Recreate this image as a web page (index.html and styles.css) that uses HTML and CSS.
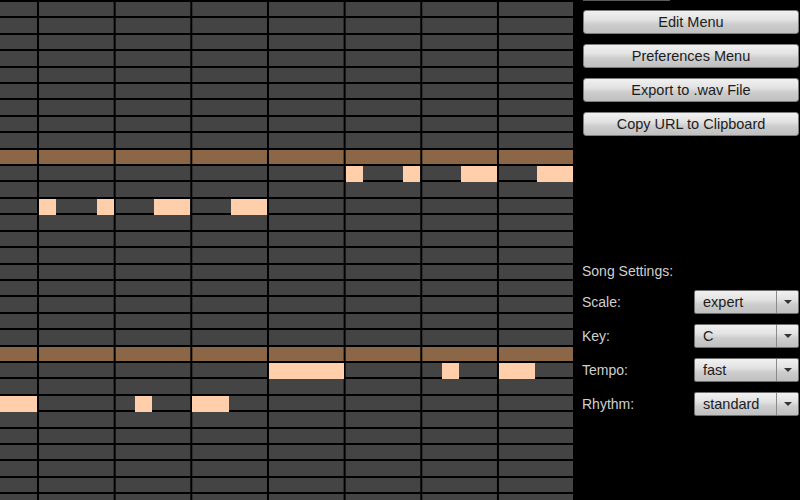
FILE: index.html
```html
<!DOCTYPE html>
<html lang="en">
<head>
<meta charset="utf-8">
<title>Song Editor</title>
<link rel="stylesheet" href="styles.css">
</head>
<body>
<div class="app">
  <div class="grid">
    <div class="row"></div>
    <div class="row"></div>
    <div class="row"></div>
    <div class="row"></div>
    <div class="row"></div>
    <div class="row"></div>
    <div class="row"></div>
    <div class="row"></div>
    <div class="row"></div>
    <div class="row tonic"></div>
    <div class="row">
      <div class="note" style="left:345.7px;width:17.2px"></div>
      <div class="note" style="left:403.2px;width:17.2px"></div>
      <div class="note" style="left:460.7px;width:36.3px"></div>
      <div class="note" style="left:537.3px;width:36.3px"></div>
    </div>
    <div class="row"></div>
    <div class="row">
      <div class="note" style="left:39px;width:17.2px"></div>
      <div class="note" style="left:96.5px;width:17.8px"></div>
      <div class="note" style="left:154px;width:36.3px"></div>
      <div class="note" style="left:230.7px;width:36.3px"></div>
    </div>
    <div class="row"></div>
    <div class="row"></div>
    <div class="row"></div>
    <div class="row"></div>
    <div class="row"></div>
    <div class="row"></div>
    <div class="row"></div>
    <div class="row"></div>
    <div class="row tonic"></div>
    <div class="row">
      <div class="note" style="left:269px;width:74.7px"></div>
      <div class="note" style="left:441.5px;width:17.2px"></div>
      <div class="note" style="left:499px;width:36.3px"></div>
    </div>
    <div class="row"></div>
    <div class="row">
      <div class="note" style="left:0px;width:37px"></div>
      <div class="note" style="left:134.8px;width:17.2px"></div>
      <div class="note" style="left:192.3px;width:36.3px"></div>
    </div>
    <div class="row"></div>
    <div class="row"></div>
    <div class="row"></div>
    <div class="row"></div>
    <div class="row"></div>
    <div class="row"></div>
    <div class="row"></div>
  </div>
  <div class="panel">
    <div class="topbar"></div>
    <div class="buttons">
      <div class="btn">Edit Menu</div>
      <div class="btn">Preferences Menu</div>
      <div class="btn">Export to .wav File</div>
      <div class="btn">Copy URL to Clipboard</div>
    </div>
    <div class="settings">
      <div class="heading">Song Settings:</div>
      <div class="setting">
        <span class="label">Scale:</span>
        <div class="select"><span class="value">expert</span><span class="arrow"><span class="tri"></span></span></div>
      </div>
      <div class="setting">
        <span class="label">Key:</span>
        <div class="select"><span class="value">C</span><span class="arrow"><span class="tri"></span></span></div>
      </div>
      <div class="setting">
        <span class="label">Tempo:</span>
        <div class="select"><span class="value">fast</span><span class="arrow"><span class="tri"></span></span></div>
      </div>
      <div class="setting">
        <span class="label">Rhythm:</span>
        <div class="select"><span class="value">standard</span><span class="arrow"><span class="tri"></span></span></div>
      </div>
    </div>
  </div>
</div>
</body>
</html>
```
FILE: styles.css
```css
html, body {
  margin: 0;
  padding: 0;
  background: #000;
}
body {
  font-family: "Liberation Sans", Arial, sans-serif;
  width: 800px;
  height: 500px;
  overflow: hidden;
}
.app {
  display: flex;
  width: 800px;
  height: 500px;
}
.grid {
  width: 573px;
  height: 500px;
  overflow: hidden;
  background: #000;
  flex: none;
}
.row {
  position: relative;
  box-sizing: border-box;
  height: 16.42px;
  border-top: 2px solid #000;
  background-image: linear-gradient(to right, #444444 74.67px, #000 74.67px);
  background-size: 76.67px 100%;
  background-position: -37.67px 0;
  background-repeat: repeat-x;
}
.row.tonic {
  background-image: linear-gradient(to right, #8c6747 74.67px, #000 74.67px);
}
.note {
  position: absolute;
  top: 0;
  height: 16.42px;
  background: #ffcfab;
  z-index: 1;
}
.panel {
  flex: 1;
  box-sizing: border-box;
  padding: 0 2px 0 10px;
  display: flex;
  flex-direction: column;
}
.topbar {
  width: 87px;
  height: 1px;
  background: #5a5a5a;
}
.buttons {
  margin-top: 9px;
  display: flex;
  flex-direction: column;
  gap: 10px;
}
.btn {
  box-sizing: border-box;
  height: 24px;
  border: 1px solid #7d7d7d;
  border-radius: 3px;
  background: linear-gradient(to bottom, #f1f1f1 0%, #e2e2e2 40%, #cdcdcd 60%, #c0c0c0 100%);
  color: #1c1c1c;
  font-size: 14.5px;
  line-height: 23px;
  text-align: center;
}
.settings {
  margin-top: 123px;
  margin-left: -1px;
  display: flex;
  flex-direction: column;
  gap: 10px;
}
.heading {
  height: 24px;
  line-height: 24px;
  font-size: 14px;
  color: #d0d0d0;
  margin-bottom: -3px;
}
.setting {
  display: flex;
  align-items: center;
  height: 24px;
}
.label {
  width: 112px;
  font-size: 14px;
  color: #d0d0d0;
}
.select {
  box-sizing: border-box;
  width: 105px;
  height: 24px;
  display: flex;
  border: 1px solid #6f6f6f;
  border-radius: 2px;
  background: linear-gradient(to bottom, #f1f1f1 0%, #e2e2e2 40%, #cdcdcd 60%, #c0c0c0 100%);
}
.value {
  flex: 1;
  padding-left: 8px;
  font-size: 14.5px;
  line-height: 23px;
  color: #1c1c1c;
}
.arrow {
  width: 21px;
  border-left: 1px solid #8a8a8a;
  display: flex;
  align-items: center;
  justify-content: center;
}
.tri {
  width: 0;
  height: 0;
  border-left: 4px solid transparent;
  border-right: 4px solid transparent;
  border-top: 4px solid #333;
}
```
